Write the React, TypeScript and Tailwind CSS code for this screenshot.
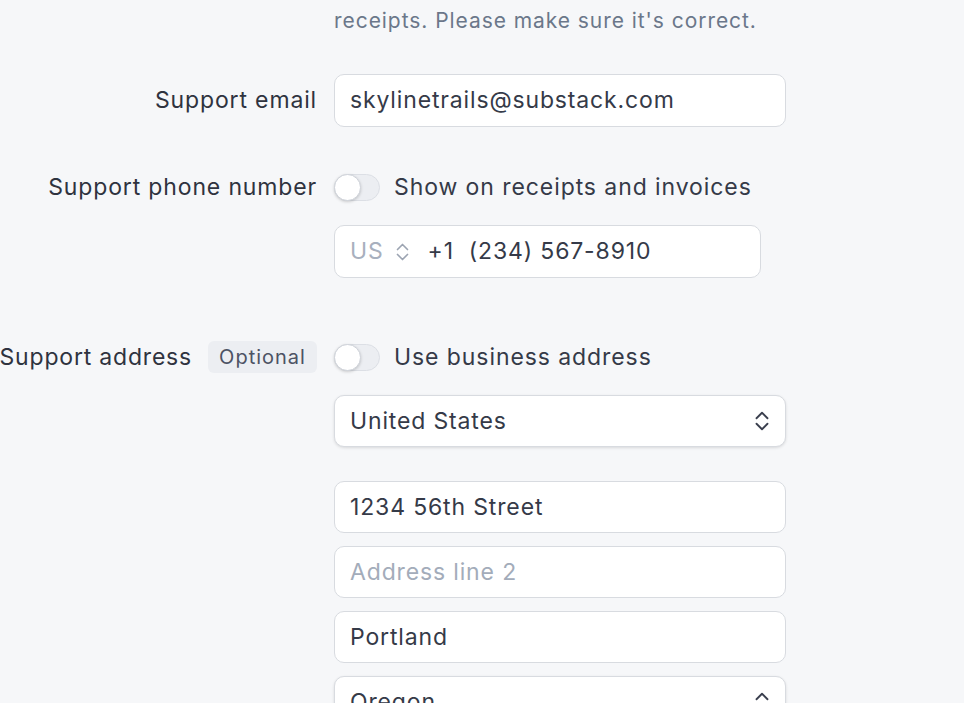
import React from "react";

// Small up/down chevron pair, like the native select indicator
function UpDown({ className }: { className?: string }) {
    return (
        <svg viewBox="0 0 16 24" className={className} fill="none" stroke="currentColor" strokeWidth={2} strokeLinecap="round" strokeLinejoin="round">
            <path d="M2 9l6-6 6 6" />
            <path d="M2 15l6 6 6-6" />
        </svg>
    );
}

function Toggle() {
    return (
        <div className="relative h-[27px] w-[46px] shrink-0 rounded-full border border-[#dcdfe5] bg-[#eceef2]">
            <div className="absolute left-[-1px] top-[-1px] h-[27px] w-[27px] rounded-full border border-[#cfd3da] bg-white shadow-[0_1px_3px_rgba(0,0,0,0.18)]" />
        </div>
    );
}

function Row({ label, children, className }: { label?: React.ReactNode; children: React.ReactNode; className?: string }) {
    return (
        <div className={"flex items-center " + (className ?? "")}>
            <div className="flex w-[317px] shrink-0 items-center justify-end whitespace-nowrap">{label}</div>
            <div className="ml-[17px] w-[452px]">{children}</div>
        </div>
    );
}

const inputCls =
    "flex h-[52px] items-center rounded-[10px] border-[1.5px] border-[#d8dbe0] bg-white px-[15px] text-[23px] tracking-[0.037em] text-[#353a48]";

export default function App() {
    return (
        <div className="h-[703px] w-[964px] overflow-hidden bg-[#f6f7f9] font-['Inter',sans-serif] text-[#2f333f]">
            <Row className="pt-[6px]">
                <p className="text-[21px] leading-[30px] tracking-[0.045em] text-[#6b778a]">receipts. Please make sure it's correct.</p>
            </Row>

            {/* Support email */}
            <Row className="mt-[38px]" label={<span className="text-[23px] tracking-[0.037em]">Support email</span>}>
                <div className={inputCls + " h-[53px] w-full"}>skylinetrails@substack.com</div>
            </Row>

            {/* Support phone */}
            <Row className="mt-[45px] h-[30px]" label={<span className="text-[23px] tracking-[0.037em]">Support phone number</span>}>
                <div className="flex items-center gap-[14px]">
                    <Toggle />
                    <span className="text-[23px] tracking-[0.04em] text-[#353a48]">Show on receipts and invoices</span>
                </div>
            </Row>
            <Row className="mt-[23px]">
                <div className={inputCls + " h-[53px] w-[427px]"}>
                    <span className="text-[#a8b0be]">US</span>
                    <UpDown className="ml-[10px] h-[20px] w-[17px] text-[#9ca4b2]" />
                    <span className="ml-[17px]">+1</span>
                    <span className="ml-[15px]">(234) 567-8910</span>
                </div>
            </Row>

            {/* Support address */}
            <Row
                className="mt-[63px] h-[32px]"
                label={
                    <>
                        <span className="shrink-0 text-[23px] tracking-[0.035em]">Support address</span>
                        <span className="ml-[16px] flex h-[32px] w-[109px] shrink-0 items-center justify-center rounded-[6px] bg-[#eceef2] text-[20px] tracking-[0.05em] text-[#4d5364]">
                            Optional
                        </span>
                    </>
                }
            >
                <div className="flex items-center gap-[14px]">
                    <Toggle />
                    <span className="text-[23px] tracking-[0.04em] text-[#353a48]">Use business address</span>
                </div>
            </Row>
            <Row className="mt-[22px]">
                <div className={inputCls + " w-full justify-between shadow-[0_1px_3px_rgba(0,0,0,0.12)]"}>
                    <span>United States</span>
                    <UpDown className="h-[22px] w-[16px] text-[#3a3f4e]" />
                </div>
            </Row>

            <Row className="mt-[34px]">
                <div className="flex flex-col gap-[13px]">
                    <div className={inputCls + " w-full"}>1234 56th Street</div>
                    <div className={inputCls + " w-full text-[#a3acba]"}>Address line 2</div>
                    <div className={inputCls + " w-full"}>Portland</div>
                    <div className={inputCls + " w-full justify-between shadow-[0_1px_3px_rgba(0,0,0,0.12)]"}>
                        <span>Oregon</span>
                        <UpDown className="h-[22px] w-[16px] text-[#3a3f4e]" />
                    </div>
                </div>
            </Row>
        </div>
    );
}
